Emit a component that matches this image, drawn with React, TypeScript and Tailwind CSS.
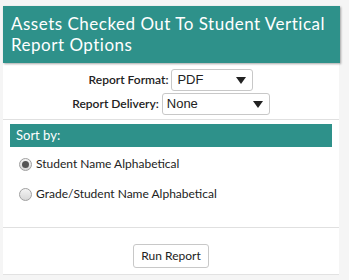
import { useState } from 'react';

const font = { fontFamily: 'Lato, "Open Sans", sans-serif' };

const App = () => {
  const [sortBy, setSortBy] = useState('student');
  const [format, setFormat] = useState('PDF');
  const [delivery, setDelivery] = useState('None');

  return (
    <div className="min-h-[280px] w-[349px] bg-[#f5f5f5] pt-[6px] pl-[3px]" style={font}>
      <div className="w-[336px] bg-white pb-[6px] border-b border-[#e2e2e2]">
        {/* Title bar */}
        <div className="w-[337px] bg-[#2e918a] px-[8px] pt-[7px] pb-[8px] text-[17px] leading-[21px] tracking-[0.5px] text-white shadow-[1px_1px_2px_rgba(0,0,0,0.35)]">
          Assets Checked Out To Student Vertical Report Options
        </div>

        {/* Format / delivery */}
        <div className="flex flex-col items-center gap-[2px] pt-[6px] pb-[4px] text-[12px] text-[#222]">
          <div className="flex items-center gap-[3px]">
            <span className="font-semibold">Report Format:</span>
            <div className="relative flex h-[22px] w-[82px] items-center rounded-[3px] border border-[#c8c8c8] bg-white pl-[5px]">
              <select
                value={format}
                onChange={(e) => setFormat(e.target.value)}
                className="w-full appearance-none bg-transparent text-[13px] outline-none"
                style={{ fontFamily: '"Liberation Sans", Arial, sans-serif' }}
              >
                <option>PDF</option>
                <option>Excel</option>
              </select>
              <span className="pointer-events-none absolute right-[6px] top-[7px] h-0 w-0 border-x-[5px] border-t-[7px] border-x-transparent border-t-[#222]" />
            </div>
          </div>
          <div className="flex items-center gap-[3px]">
            <span className="font-semibold">Report Delivery:</span>
            <div className="relative flex h-[22px] w-[108px] items-center rounded-[3px] border border-[#c8c8c8] bg-white pl-[4px]">
              <select
                value={delivery}
                onChange={(e) => setDelivery(e.target.value)}
                className="w-full appearance-none bg-transparent text-[13px] outline-none"
                style={{ fontFamily: '"Liberation Sans", Arial, sans-serif' }}
              >
                <option>None</option>
                <option>Email</option>
              </select>
              <span className="pointer-events-none absolute right-[6px] top-[7px] h-0 w-0 border-x-[5px] border-t-[7px] border-x-transparent border-t-[#222]" />
            </div>
          </div>
        </div>

        <div className="border-t border-[#e0e0e0] px-[7px] pt-[4px]">
          <div className="h-[23px] bg-[#2e918a] pl-[6px] text-[13px] leading-[23px] text-white">Sort by:</div>

          <div className="flex flex-col gap-[12px] px-[9px] pt-[8px] pb-[24px] text-[12px] text-[#222]">
            {[
              { id: 'student', label: 'Student Name Alphabetical' },
              { id: 'grade', label: 'Grade/Student Name Alphabetical' },
            ].map((opt) => (
              <label key={opt.id} className="flex cursor-pointer items-center gap-[4px]">
                <span
                  className="flex h-[13px] w-[13px] items-center justify-center rounded-full border border-[#a0a0a0] bg-gradient-to-b from-[#f4f4f4] to-[#d8d8d8]"
                  onClick={() => setSortBy(opt.id)}
                >
                  {sortBy === opt.id && <span className="h-[7px] w-[7px] rounded-full bg-[#555]" />}
                </span>
                <span onClick={() => setSortBy(opt.id)}>{opt.label}</span>
              </label>
            ))}
          </div>
        </div>

        <div className="flex justify-center border-t border-[#e0e0e0] pt-[16px]">
          <button className="h-[24px] rounded-[3px] border border-[#c8c8c8] bg-white px-[7px] text-[12px] text-[#222]">
            Run Report
          </button>
        </div>
      </div>
    </div>
  );
};

export default App;
